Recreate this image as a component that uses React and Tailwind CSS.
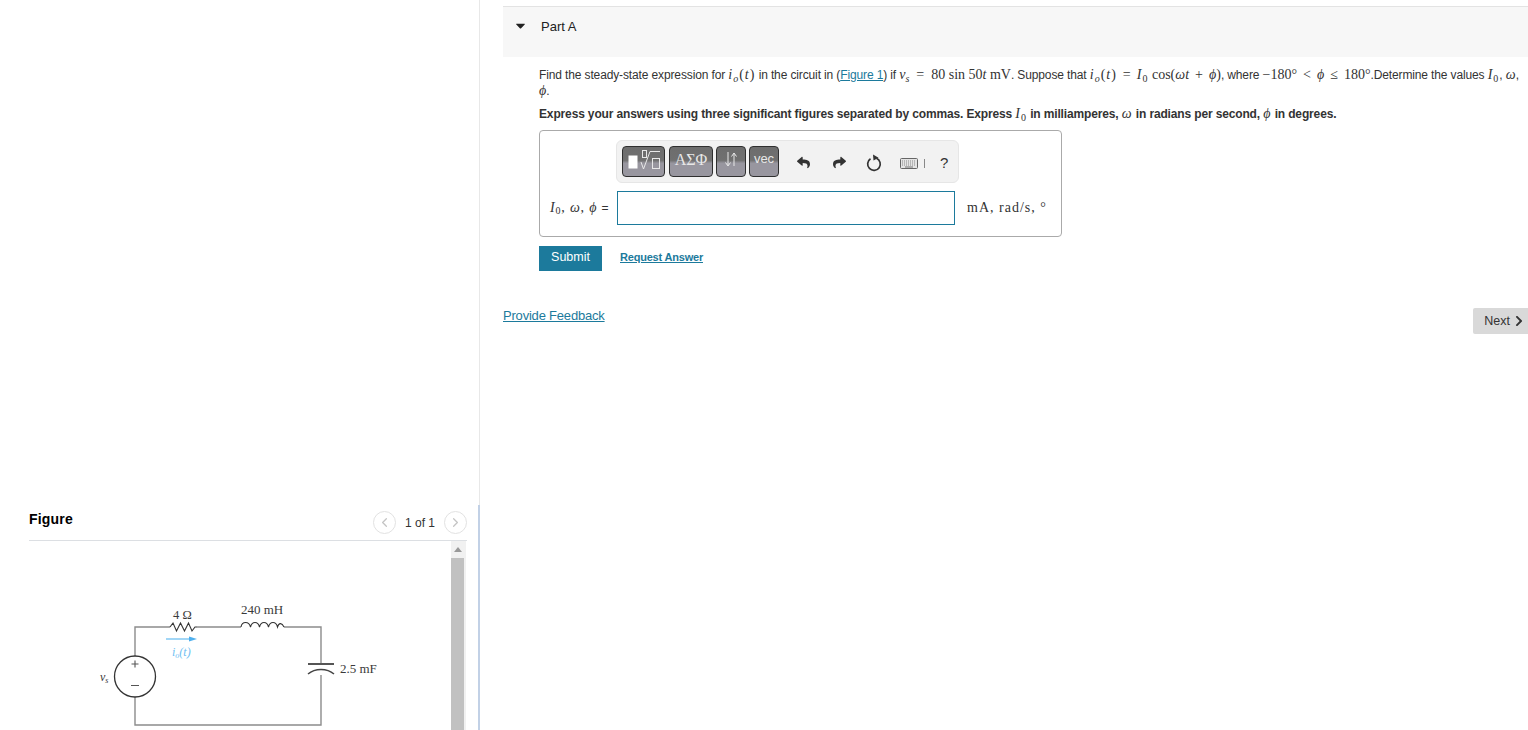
import { FaReply, FaShare, FaCaretDown, FaChevronRight } from 'react-icons/fa';
import { ChevronLeft, ChevronRight } from 'lucide-react';

const serif = '[font-family:"Liberation_Serif",serif]';

function M({ children }) {
    return <span className='[font-family:"Liberation_Serif",serif] text-[14px] tracking-normal font-normal'>{children}</span>;
}

function I({ children }) {
    return <i className='[font-family:"Liberation_Serif",serif]'>{children}</i>;
}

function Sub({ children }) {
    return <sub className="text-[10px] not-italic">{children}</sub>;
}

// symbols set looser than plain text, like the rendered formulas
function Wide({ children }) {
    return <span className="tracking-[1px]">{children}</span>;
}

// math operator with the wide spacing of the rendered formulas
function Op({ children }) {
    return <span className="mx-[6px]">{children}</span>;
}

function ToolButton({ className, children }) {
    return (
        <div className={`h-[31px] rounded-[4px] border border-[#2f2f2f] bg-[linear-gradient(#6d6d6d_0%,#707070_46%,#98969f_56%,#98969f_100%)] flex items-center justify-center text-[#e8e8e8] ${className}`}>
            {children}
        </div>
    );
}

function Circuit() {
    return (
        <svg width="422" height="189" viewBox="29 541 422 189" className="block">
            <g fill="none" stroke="#8c8c8c" strokeWidth="1.4">
                <path d="M135 656V627H170M197 627H241M284 627H321V664M321 675V725H135V697" />
            </g>
            <g fill="none" stroke="#333" strokeWidth="1.1">
                <path d="M170 627L173 623L176.500 631L180.500 623L184.500 631L188.500 623L192 631L195 627H197" />
                <path d="M241 627C242 621 249 621 250.500 627C252 621 258 621 259.500 627C261 621 267 621 268.500 627C270 621 276 621 277.500 627C279 622 282 623 284 627" />
                <circle cx="135" cy="676.500" r="20.500" strokeWidth="1.3" />
                <path d="M131.500 664H138.500M135 660.500V667.500M131 685.500H139" stroke="#555" />
            </g>
            <path d="M308 664H334" stroke="#555" strokeWidth="2" />
            <path d="M308 674C315 668 327 668 334 674" fill="none" stroke="#444" strokeWidth="1.5" />
            <path d="M166 639H190" stroke="#6fc0f2" strokeWidth="1.300" />
            <path d="M189 636.500L197 639L189 641.500Z" fill="#4fb0ee" />
            <g className={serif} fill="#3a3a3a" fontSize="13">
                <text x="173" y="619" fontSize="12.500">4 Ω</text>
                <text x="241" y="614">240 mH</text>
                <text x="340" y="673">2.5 mF</text>
                <text x="100" y="681" fontStyle="italic" fontSize="12">v<tspan fontSize="8" dy="2">s</tspan></text>
            </g>
            <text x="172" y="656" className={serif} fill="#6fc0f2" fontSize="12" fontStyle="italic">i<tspan fontSize="8" dy="2">o</tspan><tspan dy="-2">(t)</tspan></text>
        </svg>
    );
}

function KeyboardIcon() {
    return (
        <svg width="18" height="11" viewBox="0 0 18 11">
            <rect x="0.500" y="0.500" width="17" height="10" rx="1" fill="#e4e4e4" stroke="#666" />
            <path d="M2 3H16M2 5H16M2 7H16" stroke="#888" strokeWidth="1" strokeDasharray="1 1" />
            <path d="M5 9H13" stroke="#777" />
        </svg>
    );
}

function RootIcon() {
    return (
        <svg width="40" height="26" viewBox="0 0 40 26">
            <rect x="4.500" y="6.500" width="9" height="13" fill="#fff" />
            <rect x="18.500" y="1.500" width="4" height="7" fill="none" stroke="#e8e8e8" />
            <path d="M17 13L19.500 20L26 2.500H36" fill="none" stroke="#e8e8e8" strokeWidth="1" />
            <rect x="28.500" y="9.500" width="7" height="10" fill="none" stroke="#e8e8e8" />
        </svg>
    );
}

function SwapIcon() {
    return (
        <svg width="12" height="15" viewBox="0 0 12 15" className="mb-[4px]" fill="none" stroke="#e8e8e8">
            <path d="M3 0V13M0.500 10.500L3 14L5.500 10.500" />
            <path d="M9 14V1M6.500 4.500L9 1L11.500 4.500" />
        </svg>
    );
}

function ResetIcon() {
    return (
        <svg width="16" height="18" viewBox="0 0 16 18" fill="none">
            <path d="M4.500 4.800A6.300 6.300 0 1 0 10.500 4.300" stroke="#333" strokeWidth="1.700" />
            <path d="M7 0.500L12.500 3.800L7.500 6.500Z" fill="#333" />
        </svg>
    );
}

function Toolbar() {
    return (
        <div className="w-[343px] h-[43px] ml-[76px] rounded-[6px] border border-[#e6e6e6] bg-[#f2f2f2] flex items-center pl-[5px]">
            <ToolButton className="w-[43px]"><RootIcon /></ToolButton>
            <ToolButton className={`w-[44px] ml-[4px] text-[16px] pb-[4px] ${serif}`}>ΑΣΦ</ToolButton>
            <ToolButton className="w-[30px] ml-[3px]"><SwapIcon /></ToolButton>
            <ToolButton className="w-[30px] ml-[3px] text-[13px] pb-[6px]">vec</ToolButton>
            <FaReply className="ml-[18px] mt-[2px] text-[#333] text-[13px]" />
            <FaShare className="ml-[23px] mt-[2px] text-[#333] text-[13px]" />
            <div className="ml-[20px] mt-[2px] flex"><ResetIcon /></div>
            <div className="ml-[18px] mt-[4px] flex items-center"><KeyboardIcon /></div>
            <div className="ml-[6px] mt-[4px] w-px h-[9px] bg-[#888]" />
            <span className="ml-[15px] mt-[3px] text-[15px] text-[#333]">?</span>
        </div>
    );
}

function PagerButton({ children }) {
    return (
        <div className="w-[23px] h-[23px] rounded-full border border-[#e2e2e2] flex items-center justify-center text-[#c4c4c4]">
            {children}
        </div>
    );
}

export default function App() {
    return (
        <div className='w-[1528px] h-[730px] overflow-hidden bg-white flex [font-family:"Liberation_Sans",sans-serif] text-[#333]'>
            {/* figure column */}
            <div className="w-[480px] h-full shrink-0 flex flex-col justify-end relative">
                <div className="absolute right-0 top-0 bottom-0 w-[1px] bg-[#e8e8e8]" />
                <div className="absolute right-0 top-[505px] bottom-0 w-[2px] bg-[#c2d1e6]" />
                <div className="ml-[29px] mr-[13px] h-[225px] flex flex-col">
                    <div className="h-[36px] shrink-0 border-b border-[#dcdfe3] flex items-start justify-between">
                        <span className="text-[14px] font-bold text-black tracking-[0.2px] leading-[16px] mt-[6px]">Figure</span>
                        <div className="flex items-center mt-[6px]">
                            <PagerButton><ChevronLeft size={15} /></PagerButton>
                            <span className="text-[12px] mx-[9px]">1 of 1</span>
                            <PagerButton><ChevronRight size={15} /></PagerButton>
                        </div>
                    </div>
                    <div className="flex flex-1 min-h-0">
                        <div className="w-[422px] shrink-0"><Circuit /></div>
                        <div className="w-[15px] bg-[#f1f1f1] flex flex-col items-start">
                            <div className="w-[13px] h-[17px] flex items-center justify-center">
                                <div className="w-0 h-0 border-x-[4px] border-x-transparent border-b-[5px] border-b-[#999]" />
                            </div>
                            <div className="w-[13px] flex-1 bg-[#c1c1c1]" />
                        </div>
                    </div>
                </div>
            </div>

            {/* question column */}
            <div className="flex-1 min-w-0 pl-[23px] pt-[6px] text-[12px]">
                <div className="h-[51px] border-t border-[#e3e3e3] bg-[#f7f7f7] flex items-start">
                    <FaCaretDown className="ml-[10px] mt-[11px] text-[#222] text-[15px]" />
                    <span className="ml-[13px] mt-[12px] text-[13px] text-[#222] leading-[16px]">Part A</span>
                </div>
                <div className="ml-[36px]">
                    <p className="mt-[10px] leading-[15px] whitespace-nowrap tracking-[-0.13px]">
                        Find the steady-state expression for <M><Wide><I>i</I><Sub><I>o</I></Sub>(<I>t</I>)</Wide></M> in the circuit in (<a className="text-[#1c7a9c] underline">Figure 1</a>) if <M><I>v</I><Sub><I>s</I></Sub><span className="mx-[7px]">=</span>80 sin 50<I>t</I> mV</M>. Suppose that <M><Wide><I>i</I><Sub><I>o</I></Sub>(<I>t</I>)</Wide><Op>=</Op><Wide><I>I</I><Sub>0</Sub></Wide> cos(<I>ωt</I><Op>+</Op><I>ϕ</I>)</M>, where <M>−180°<Op>&lt;</Op><I>ϕ</I><Op>≤</Op>180°</M>.Determine the values <M><Wide><I>I</I><Sub>0</Sub></Wide></M>, <M><I>ω</I></M>,
                        <br />
                        <M><I>ϕ</I></M>.
                    </p>
                    <p className="mt-[7px] leading-[16px] font-bold whitespace-nowrap tracking-[-0.145px]">
                        Express your answers using three significant figures separated by commas. Express <M><Wide><I>I</I><Sub>0</Sub></Wide></M> in milliamperes, <M><Wide><I>ω</I></Wide></M> in radians per second, <M><Wide><I>ϕ</I></Wide></M> in degrees.
                    </p>
                    <div className="mt-[8px] w-[523px] h-[107px] rounded-[4px] border border-[#aaa] pt-[9px]">
                        <Toolbar />
                        <div className="flex items-center mt-[8px]">
                            <span className={`ml-[10px] w-[67px] text-[14px] whitespace-nowrap pb-[2px] tracking-[0.8px] ${serif}`}><I>I</I><Sub>0</Sub>, <I>ω</I>, <I>ϕ</I> <span className='[font-family:"Liberation_Sans",sans-serif] text-[12px]'>=</span></span>
                            <div className="w-[338px] h-[34px] border border-[#1c7a9c]" />
                            <span className={`ml-[12px] text-[14px] whitespace-nowrap pb-[2px] tracking-[1px] ${serif}`}>mA, rad/s, °</span>
                        </div>
                    </div>
                    <div className="mt-[9px] flex items-center">
                        <div className="w-[63px] h-[25px] bg-[#1c7a9c] text-white text-[12.500px] flex items-center justify-center pb-[2px]">Submit</div>
                        <a className="ml-[18px] mb-[2px] text-[11px] font-bold text-[#1c7a9c] underline tracking-[-0.2px]">Request Answer</a>
                    </div>
                </div>
                <div className="mt-[37px] flex items-start justify-between">
                    <a className="text-[13px] text-[#1c7a9c] underline leading-[15px] tracking-[-0.2px]">Provide Feedback</a>
                    <div className="w-[55px] h-[26px] bg-[#d9d9d9] rounded-l-[2px] flex items-center justify-end pr-[3px] text-[12.500px] text-[#333]">
                        Next<FaChevronRight className="ml-[3px] text-[12px]" />
                    </div>
                </div>
            </div>
        </div>
    );
}
